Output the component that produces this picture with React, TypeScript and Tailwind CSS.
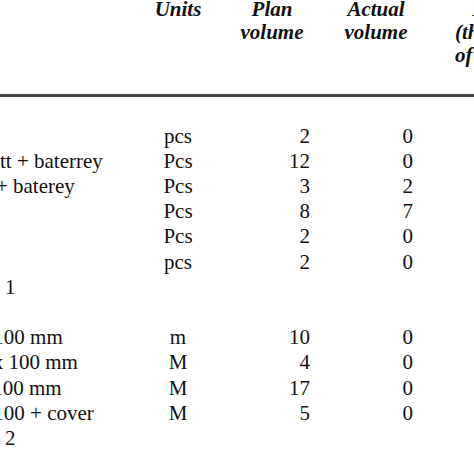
const rows = [
  { item: "Lighting installation", unit: "", plan: "", actual: "" },
  { item: "Lamp TL 2x36 watt", unit: "pcs", plan: "2", actual: "0" },
  { item: "Emergency lamp 2x8 watt + baterrey", unit: "Pcs", plan: "12", actual: "0" },
  { item: "Emergency lamp 8 watt + baterey", unit: "Pcs", plan: "3", actual: "2" },
  { item: "Downlight 18 watt", unit: "Pcs", plan: "8", actual: "7" },
  { item: "Single switch", unit: "Pcs", plan: "2", actual: "0" },
  { item: "Power outlet", unit: "pcs", plan: "2", actual: "0" },
  { item: "Subtotal electrical works 1", unit: "", plan: "", actual: "" },
  { item: "Cable tray installation", unit: "", plan: "", actual: "" },
  { item: "Cable tray ladder 200 x 100 mm", unit: "m", plan: "10", actual: "0" },
  { item: "Cable tray bending 300 x 100 mm", unit: "M", plan: "4", actual: "0" },
  { item: "Cable tray elbow 300 x 100 mm", unit: "M", plan: "17", actual: "0" },
  { item: "Cable tray ladder 300 x 100 + cover", unit: "M", plan: "5", actual: "0" },
  { item: "Subtotal electrical works 2", unit: "", plan: "", actual: "" },
];

const cols = "grid grid-cols-[357px_60px_102px_103px_122px]";

export default function App() {
  return (
    <div
      className="w-[474px] h-[474px] overflow-hidden bg-white text-[#111]"
      style={{ fontFamily: '"Liberation Serif", "Times New Roman", serif' }}
    >
      <div className="ml-[-209px] w-[744px] text-[21px]">
        {/* Header */}
        <div className="h-[94px] flex flex-col">
          <div className={`${cols} mt-[-2px] font-bold italic leading-[23px]`}>
            <div />
            <div className="text-center">Units</div>
            <div className="pl-[26px] text-center">
              Plan
              <br />
              volume
            </div>
            <div className="pl-[29px] text-center">
              Actual
              <br />
              volume
            </div>
            <div className="pl-[42px] text-center whitespace-nowrap">
              Price
              <br />
              (thousands
              <br />
              of rupiah)
            </div>
          </div>
        </div>
        <div className="h-[3px] bg-[#474747]" />

        {/* Body */}
        <div className="pt-[1.5px] leading-[25.2px]">
          {rows.map((r, i) => (
            <div key={i} className={`${cols} h-[25.2px]`}>
              <div className="whitespace-nowrap">{r.item}</div>
              <div className="text-center">{r.unit}</div>
              <div className="text-right">{r.plan}</div>
              <div className="text-right">{r.actual}</div>
              <div />
            </div>
          ))}
        </div>
      </div>
    </div>
  );
}
